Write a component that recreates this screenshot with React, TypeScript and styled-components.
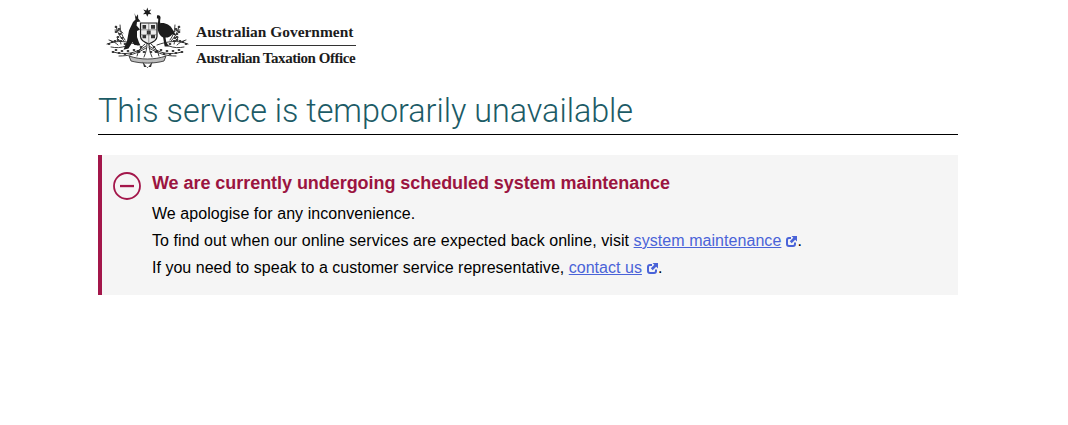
import React from "react";
import styled, { createGlobalStyle } from "styled-components";

const Global = createGlobalStyle`
  html, body { margin: 0; padding: 0; background: #fff; }
  body { font-family: "Liberation Sans", Arial, sans-serif; color: #000; }
`;
const Page = styled.main`
  width: 860px;
  margin-left: 98px;
`;
const Brand = styled.header`
  display: flex;
  align-items: flex-start;
  height: 91px;
  padding: 5px 0 0 7px;
  box-sizing: border-box;
`;
const Crest = styled.svg`
  width: 85px;
  height: 65px;
  flex: none;
`;
const Wordmark = styled.div`
  width: 160px;
  margin: 18px 0 0 6px;
  font-family: "Liberation Serif", "Times New Roman", serif;
  font-weight: 700;
  color: #1c1c1c;
`;
const WordLine = styled.div<{ $ruled?: boolean; $tight?: boolean }>`
  font-size: ${(p) => (p.$tight ? "15px" : "15.45px")};
  line-height: 18px;
  white-space: nowrap;
  letter-spacing: ${(p) => (p.$tight ? "-0.45px" : "0")};
  padding-bottom: ${(p) => (p.$ruled ? "4px" : "0")};
  border-bottom: ${(p) => (p.$ruled ? "1px solid #333" : "0")};
  margin-bottom: ${(p) => (p.$ruled ? "3px" : "0")};
`;
const Title = styled.h1`
  margin: 0 0 20px;
  height: 44px;
  box-sizing: border-box;
  border-bottom: 1px solid #000;
  font-family: "Roboto", "Liberation Sans", sans-serif;
  font-weight: 300;
  font-size: 32.3px;
  line-height: 40px;
  color: #1c5b66;
  white-space: nowrap;
`;
const Alert = styled.section`
  display: flex;
  height: 140px;
  box-sizing: border-box;
  background: #f5f5f5;
  border-left: 4px solid #a3164a;
  padding: 16px 0 0 10.5px;
`;
const AlertIcon = styled.svg`
  width: 28px;
  height: 28px;
  flex: none;
  margin: 1px 11.5px 0 0;
`;
const AlertHeading = styled.h2`
  margin: 0 0 8px;
  font-size: 18px;
  line-height: 24px;
  font-weight: 700;
  letter-spacing: -0.05px;
  color: #9b1440;
`;
const AlertLine = styled.p<{ $spacing?: string }>`
  margin: 0 0 5px;
  font-size: 16px;
  line-height: 22px;
  letter-spacing: ${(p) => p.$spacing ?? "0.058px"};
  white-space: nowrap;
`;
const Link = styled.a`
  color: #4a63d8;
  text-decoration: underline;
`;
const ExtIcon = styled.svg`
  display: inline-block;
  width: 11px;
  height: 11px;
  margin-left: 5px;
  vertical-align: -1px;
`;

const External = () => (
  <ExtIcon viewBox="0 0 11 11" aria-hidden="true">
    <path d="M5 2H3A2 2 0 0 0 1 4v4a2 2 0 0 0 2 2h4a2 2 0 0 0 2-2V6.500" fill="none" stroke="#4a63d8" strokeWidth="2" />
    <path d="M5.500 0H11v5.500L9.200 3.700 5.700 7.200 3.800 5.300 7.300 1.800z" fill="#4a63d8" />
  </ExtIcon>
);

const sprigs = [
  "M2 39c10-4 20-3 31 1", "M4 35c4 1 7 3 9 5", "M12 33c2 2 4 4 4 6", "M83 39c-10-4-20-3-31 1", "M81 35c-4 1-7 3-9 5", "M73 33c-2 2-4 4-4 6",
  "M8 47c12 3 22 2 33-6", "M14 51c10 0 17-2 27-8", "M77 47c-12 3-22 2-33-6", "M71 51c-10 0-17-2-27-8", "M11 21c1 6 4 11 8 15", "M15 20c0 6 2 11 5 15",
  "M74 21c-1 6-4 11-8 15", "M70 20c0 6-2 11-5 15", "M42 38c0 6-1 9-3 14", "M44 38c0 6 1 9 3 14", "M40 39c-4 3-7 7-8 12", "M46 39c4 3 7 7 8 12",
  "M10 25c3 0 6 1 8 3", "M75 25c-3 0-6 1-8 3", "M6 42c5 1 10 1 15-1", "M79 42c-5 1-10 1-15-1",
];
const dots: [number, number][] = [
  [4, 39], [7, 37], [10, 36], [13, 35], [16, 36], [20, 39], [24, 39], [81, 39], [78, 37], [75, 36], [72, 35], [69, 36], [65, 39], [61, 39],
  [8, 47], [11, 45], [14, 48], [17, 46], [20, 49], [23, 46], [26, 49], [29, 45], [33, 46], [77, 47], [74, 45], [71, 48], [68, 46], [65, 49], [62, 46], [59, 49], [56, 45], [52, 46],
  [11, 22], [14, 24], [11, 27], [15, 29], [13, 32], [17, 33], [74, 22], [71, 24], [74, 27], [72, 29], [72, 32], [70, 33], [36, 42], [49, 42], [34, 47], [51, 47], [39, 47], [46, 47],
];

const CrestArt = () => (
  <Crest viewBox="0 0 85 65" aria-hidden="true">
    <g fill="none" stroke="#262626" strokeWidth=".9" strokeLinecap="round">
      {sprigs.map((d) => <path key={d} d={d} />)}
    </g>
    <g fill="#2b2b2b">
      {dots.map(([x, y]) => <ellipse key={`${x}-${y}`} cx={x} cy={y} rx="1.400" ry="1" />)}
    </g>
    <path d="M42.300 2.500l1 2.900 3-.8-1.900 2.400 2.200 2.200-3.100-.3-1.200 2.900-1.200-2.900-3.100.3 2.200-2.200-1.900-2.400 3 .8z" fill="#1c1c1c" />
    <path d="M29.500 8l1.500 4 2-2.800.2 4.300 2.300 3-3.500.6-.5 3.400 3.500 4-3 1.500v6l2 5.500 1.500 3-6-.5-2-3-4 6.500-5 1.200 3.500-8.700 2-10.500 4-8.500 2.500-2.500z" fill="#1c1c1c" />
    <path d="M52 10.500c2.300-1 4 .7 3.500 2.800-.4 2-.6 3.500-.1 4.900 4.600-.8 9.600 1.700 11.800 5.500 1.500 2.600 3.100 5.500 4.300 7.100l-4.200-1.600c-1.800 2.600-4 3.400-6.800 3.300l.9 5.500 3.100 3.500h-4.800l-1.600-9c-3.700-1.700-5.100-5.400-5.500-9.400-.2-3.700 1-7.700.6-9.700l-1.300.2z" fill="#1c1c1c" />
    <path d="M35.500 18h16.500v13.500c0 3.500-4 5.800-8.250 7.500-4.250-1.700-8.250-4-8.250-7.500z" fill="#ededed" stroke="#1c1c1c" strokeWidth="1.200" />
    <path d="M37.500 20h3.600v3.800h-3.600zM46 20h4v3.800h-4zM41.800 25.500h3.900v3.800h-3.900zM37.500 30h3.600v3.300h-3.600zM46 30h4v3.300h-4z" fill="#333" />
    <path d="M35.500 24.800h16.500M43.750 18v21M35.500 29.800h16.500" stroke="#555" strokeWidth=".6" fill="none" />
    <path d="M24 51c12 4 25 4 37 0l-2 5c-10 2.800-23 2.800-33 0z" fill="#bdbdbd" stroke="#222" strokeWidth=".8" />
    <path d="M37.500 56.500l5 6.500 5-6.500-1.500 5.500h-7z" fill="#333" />
  </Crest>
);

export default function App() {
  return (
    <Page>
      <Global />
      <Brand>
        <CrestArt />
        <Wordmark>
          <WordLine $ruled>Australian Government</WordLine>
          <WordLine $tight>Australian Taxation Office</WordLine>
        </Wordmark>
      </Brand>
      <Title>This service is temporarily unavailable</Title>
      <Alert>
        <AlertIcon viewBox="0 0 28 28" aria-hidden="true">
          <circle cx="14" cy="14" r="13" fill="none" stroke="#a3164a" strokeWidth="1.800" />
          <rect x="7" y="12.900" width="14" height="2.300" fill="#a3164a" />
        </AlertIcon>
        <div>
          <AlertHeading>We are currently undergoing scheduled system maintenance</AlertHeading>
          <AlertLine>We apologise for any inconvenience.</AlertLine>
          <AlertLine>
            To find out when our online services are expected back online, visit <Link href="#">system maintenance</Link><External />.
          </AlertLine>
          <AlertLine $spacing="0.024px">
            If you need to speak to a customer service representative, <Link href="#">contact us</Link><External />.
          </AlertLine>
        </div>
      </Alert>
    </Page>
  );
}
